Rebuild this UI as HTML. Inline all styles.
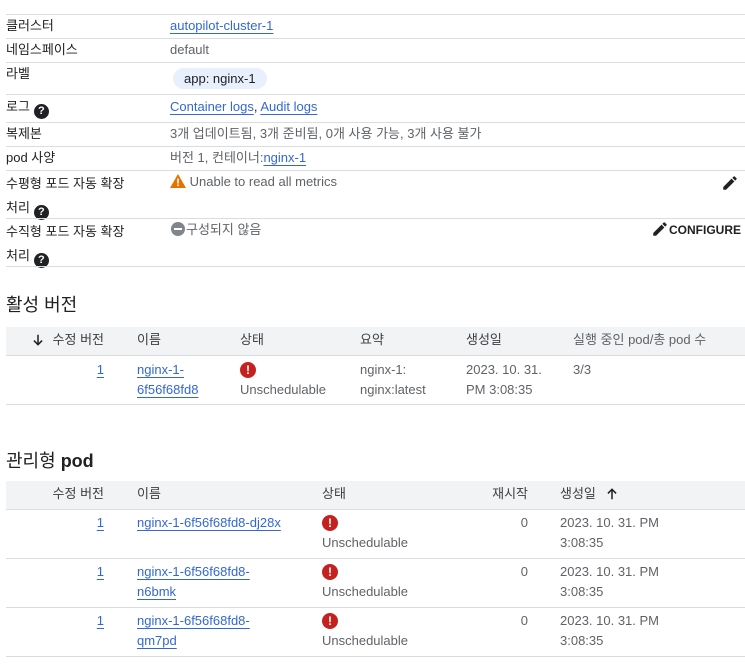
<!DOCTYPE html>
<html><head><meta charset="utf-8"><style>
*{margin:0;padding:0;box-sizing:border-box}
body{width:745px;height:668px;background:#fff;position:relative;overflow:hidden;font-family:"Liberation Sans","Noto Sans CJK KR",sans-serif;font-size:13px;color:#202124}
.a{position:absolute;white-space:nowrap;line-height:20px}
.hl{position:absolute;left:6px;right:0;height:1px;background:#dadce0}
.v{color:#5f6368}
a{color:#3367d6;text-decoration:underline;text-underline-offset:3px}
.q{display:inline-block;width:15px;height:15px;border-radius:50%;background:#202124;color:#fff;font-size:11px;font-weight:bold;line-height:15px;text-align:center;vertical-align:-3px;margin-left:4px}
.err{display:inline-block;width:16px;height:16px;border-radius:50%;background:#c5221f;color:#fff;font-size:12px;font-weight:bold;line-height:16px;text-align:center}
.hd{position:absolute;left:6px;right:0;background:#f1f3f4;border-bottom:1px solid #dadce0}
.h{color:#3c4043}
.r{text-align:right}
</style></head><body>
<div class="hl" style="top:14px"></div>
<div class="a" style="left:6px;top:16px">클러스터</div><div class="a" style="left:170px;top:16px"><a>autopilot-cluster-1</a></div>
<div class="hl" style="top:38px"></div>
<div class="a" style="left:6px;top:40px">네임스페이스</div><div class="a v" style="left:170px;top:40px">default</div>
<div class="hl" style="top:62px"></div>
<div class="a" style="left:6px;top:64px">라벨</div>
<div class="a" style="left:173px;top:68px;background:#e8f0fe;border-radius:12px;padding:0 11px;height:21px;line-height:21px">app: nginx-1</div>
<div class="hl" style="top:94px"></div>
<div class="a" style="left:6px;top:97px">로그<span class="q">?</span></div><div class="a" style="left:170px;top:97px"><a>Container logs</a>, <a>Audit logs</a></div>
<div class="hl" style="top:122px"></div>
<div class="a" style="left:6px;top:124px">복제본</div><div class="a v" style="left:170px;top:124px">3개 업데이트됨, 3개 준비됨, 0개 사용 가능, 3개 사용 불가</div>
<div class="hl" style="top:146px"></div>
<div class="a" style="left:6px;top:148px">pod 사양</div><div class="a v" style="left:170px;top:148px">버전 1, 컨테이너:<a>nginx-1</a></div>
<div class="hl" style="top:170px"></div>
<div class="a" style="left:6px;top:172px;line-height:24px">수평형 포드 자동 확장<br>처리<span class="q">?</span></div>
<div class="a v" style="left:170px;top:172px"><svg width="16" height="14" viewBox="0 0 16 14" style="vertical-align:-2px"><path d="M8 0L16 14H0Z" fill="#e37400"/><rect x="7.2" y="4.5" width="1.6" height="5" fill="#fff"/><rect x="7.2" y="10.5" width="1.6" height="1.6" fill="#fff"/></svg> Unable to read all metrics</div>
<svg class="a" style="left:721px;top:174px" width="18" height="18" viewBox="0 0 24 24"><path d="M3 17.25V21h3.75L17.81 9.94l-3.75-3.75L3 17.25zM20.71 7.04a1 1 0 000-1.41l-2.34-2.34a1 1 0 00-1.41 0l-1.83 1.83 3.75 3.75 1.83-1.83z" fill="#202124"/></svg>
<div class="hl" style="top:218px"></div>
<div class="a" style="left:6px;top:220px;line-height:24px">수직형 포드 자동 확장<br>처리<span class="q">?</span></div>
<div class="a v" style="left:170px;top:220px"><svg width="16" height="16" viewBox="0 0 16 16" style="vertical-align:-3px"><circle cx="8" cy="8" r="7" fill="#80868b"/><rect x="4" y="7" width="8" height="2" fill="#fff"/></svg>구성되지 않음</div>
<div class="a" style="left:651px;top:220px;font-weight:bold;font-size:12px;color:#202124"><svg width="18" height="18" viewBox="0 0 24 24" style="vertical-align:-4px"><path d="M3 17.25V21h3.75L17.81 9.94l-3.75-3.75L3 17.25zM20.71 7.04a1 1 0 000-1.41l-2.34-2.34a1 1 0 00-1.41 0l-1.83 1.83 3.75 3.75 1.83-1.83z" fill="#202124"/></svg>CONFIGURE</div>
<div class="hl" style="top:266px"></div>

<div class="a" style="left:6px;top:293px;font-size:18px;line-height:24px">활성 버전</div>
<div class="hd" style="top:327px;height:29px"></div>
<svg class="a" style="left:31px;top:333px" width="14" height="14" viewBox="0 0 24 24"><path d="M12 3v17M5 13l7 7 7-7" stroke="#202124" stroke-width="2.6" fill="none"/></svg>
<div class="a h r" style="left:50px;width:54px;top:330px">수정 버전</div>
<div class="a h" style="left:137px;top:330px">이름</div>
<div class="a h" style="left:240px;top:330px">상태</div>
<div class="a h" style="left:360px;top:330px">요약</div>
<div class="a h" style="left:466px;top:330px">생성일</div>
<div class="a h" style="left:573px;top:330px;color:#5f6368">실행 중인 pod/총 pod 수</div>
<div class="a r" style="left:60px;width:44px;top:360px"><a>1</a></div>
<div class="a" style="left:137px;top:360px"><a>nginx-1-</a><br><a>6f56f68fd8</a></div>
<div class="a v" style="left:240px;top:360px"><span class="err">!</span><br>Unschedulable</div>
<div class="a v" style="left:360px;top:360px">nginx-1:<br>nginx:latest</div>
<div class="a v" style="left:466px;top:360px">2023. 10. 31.<br>PM 3:08:35</div>
<div class="a v" style="left:573px;top:360px">3/3</div>
<div class="hl" style="top:404px"></div>

<div class="a" style="left:6px;top:449px;font-size:18px;line-height:24px">관리형 <b>pod</b></div>
<div class="hd" style="top:481px;height:29px"></div>
<div class="a h r" style="left:40px;width:64px;top:484px">수정 버전</div>
<div class="a h" style="left:137px;top:484px">이름</div>
<div class="a h" style="left:322px;top:484px">상태</div>
<div class="a h r" style="left:470px;width:58px;top:484px">재시작</div>
<div class="a h" style="left:560px;top:484px">생성일</div>
<svg class="a" style="left:605px;top:487px" width="14" height="14" viewBox="0 0 24 24"><path d="M12 21V4M5 11l7-7 7 7" stroke="#202124" stroke-width="2.6" fill="none"/></svg>

<div class="a r" style="left:60px;width:44px;top:513px"><a>1</a></div>
<div class="a" style="left:137px;top:513px"><a>nginx-1-6f56f68fd8-dj28x</a></div>
<div class="a v" style="left:322px;top:513px"><span class="err">!</span><br>Unschedulable</div>
<div class="a v r" style="left:470px;width:58px;top:513px">0</div>
<div class="a v" style="left:560px;top:513px">2023. 10. 31. PM<br>3:08:35</div>
<div class="hl" style="top:558px"></div>

<div class="a r" style="left:60px;width:44px;top:562px"><a>1</a></div>
<div class="a" style="left:137px;top:562px"><a>nginx-1-6f56f68fd8-</a><br><a>n6bmk</a></div>
<div class="a v" style="left:322px;top:562px"><span class="err">!</span><br>Unschedulable</div>
<div class="a v r" style="left:470px;width:58px;top:562px">0</div>
<div class="a v" style="left:560px;top:562px">2023. 10. 31. PM<br>3:08:35</div>
<div class="hl" style="top:607px"></div>

<div class="a r" style="left:60px;width:44px;top:611px"><a>1</a></div>
<div class="a" style="left:137px;top:611px"><a>nginx-1-6f56f68fd8-</a><br><a>qm7pd</a></div>
<div class="a v" style="left:322px;top:611px"><span class="err">!</span><br>Unschedulable</div>
<div class="a v r" style="left:470px;width:58px;top:611px">0</div>
<div class="a v" style="left:560px;top:611px">2023. 10. 31. PM<br>3:08:35</div>
<div class="hl" style="top:656px"></div>
</body></html>
